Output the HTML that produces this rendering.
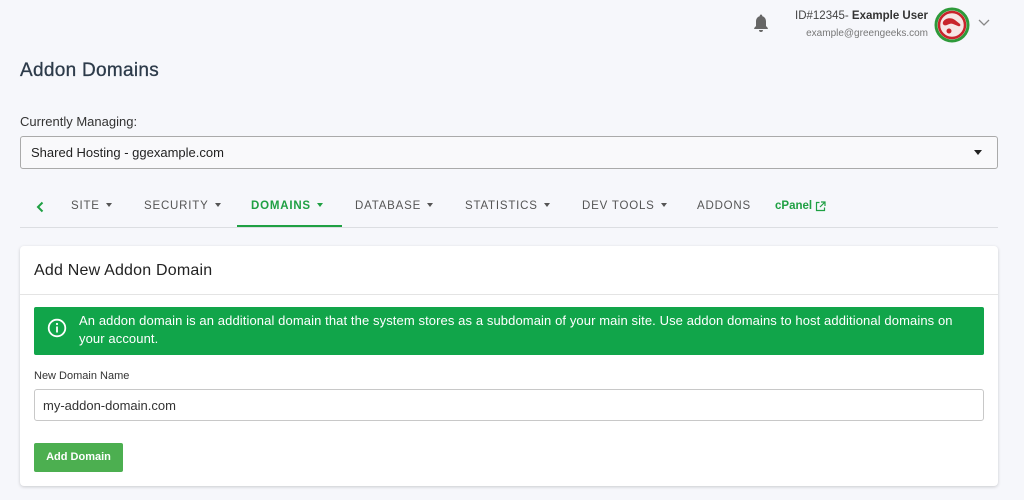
<!DOCTYPE html>
<html><head><meta charset="utf-8"><style>
*{box-sizing:border-box;margin:0;padding:0}
body{width:1024px;height:500px;overflow:hidden;background:#f6f7fb;font-family:"Liberation Sans",Arial,sans-serif;color:#333;position:relative}
.abs{position:absolute}
.tab{position:absolute;top:200px;font-size:11.5px;letter-spacing:0.8px;color:#555;white-space:nowrap}
.car{display:inline-block;border-left:3.5px solid transparent;border-right:3.5px solid transparent;border-top:4px solid currentColor;margin-left:6px;vertical-align:2px}
</style></head><body>
<svg class="abs" style="left:752px;top:13px" width="18" height="20" viewBox="0 0 18 20"><path d="M9 1.5c-.7 0-1.2.5-1.2 1.1v.5C5.3 3.8 4 5.9 4 8.5v4.5l-1.8 2v1h13.6v-1L14 13V8.5c0-2.6-1.3-4.7-3.8-5.4v-.5c0-.6-.5-1.1-1.2-1.1zM7 17a2 2 0 0 0 4 0z" fill="#666"/></svg>
<div class="abs" style="right:96px;top:10px;font-size:11.5px;color:#444;text-align:right;white-space:nowrap">ID#12345- <b style="color:#333">Example User</b></div>
<div class="abs" style="right:96px;top:28px;font-size:10px;color:#777;white-space:nowrap">example@greengeeks.com</div>
<svg class="abs" style="left:934px;top:7px" width="36" height="36" viewBox="0 0 36 36"><circle cx="18" cy="18" r="16" fill="#fff" stroke="#2e9a3a" stroke-width="3"/><circle cx="18" cy="18" r="13" fill="#f6e6e6" stroke="#c8242b" stroke-width="2.5"/><path d="M9 15c2-4 8-5 12-2l5 4c1 1 0 3-2 2l-5-2c-2-1-4 0-6 1-2 1-5 0-4-3z" fill="#c8242b"/><circle cx="15" cy="24" r="2.5" fill="#c8242b"/></svg>
<svg class="abs" style="left:978px;top:19px" width="12" height="8" viewBox="0 0 12 8"><path d="M1 1l5 5 5-5" fill="none" stroke="#888" stroke-width="1.3"/></svg>
<div class="abs" style="left:20px;top:60px;font-size:19px;color:#2d3b4a;letter-spacing:0.3px;-webkit-text-stroke:0.3px #2d3b4a">Addon Domains</div>
<div class="abs" style="left:20px;top:114px;font-size:13px;color:#333">Currently Managing:</div>
<div class="abs" style="left:20px;top:136px;width:978px;height:33px;border:1px solid #aaa;border-radius:3px;background:#f9f9fb;font-size:13px;padding:8px 10px;color:#222">Shared Hosting - ggexample.com</div>
<div class="abs" style="left:974px;top:150px;border-left:4px solid transparent;border-right:4px solid transparent;border-top:5px solid #222"></div>
<svg class="abs" style="left:36px;top:201px" width="8" height="12" viewBox="0 0 8 12"><path d="M6.5 1.5L2 6l4.5 4.5" fill="none" stroke="#1fa043" stroke-width="2"/></svg>
<div class="tab" style="left:71px">SITE<span class="car"></span></div>
<div class="tab" style="left:144px">SECURITY<span class="car"></span></div>
<div class="tab" style="left:251px;color:#1fa043;font-weight:bold">DOMAINS<span class="car"></span></div>
<div class="tab" style="left:355px">DATABASE<span class="car"></span></div>
<div class="tab" style="left:465px">STATISTICS<span class="car"></span></div>
<div class="tab" style="left:582px">DEV TOOLS<span class="car"></span></div>
<div class="tab" style="left:697px">ADDONS</div>
<div class="abs" style="left:775px;top:200px;font-size:11.5px;color:#1fa043;font-weight:bold">cPanel</div>
<svg class="abs" style="left:815px;top:201px" width="11" height="11" viewBox="0 0 11 11"><path d="M4.5 1.5H1.5v8h8V6.5M6 1h4v4M10 1L5 6" fill="none" stroke="#1fa043" stroke-width="1.2"/></svg>
<div class="abs" style="left:20px;top:227px;width:978px;height:1px;background:#dcdee2"></div>
<div class="abs" style="left:237px;top:225px;width:105px;height:2px;background:#1fa043"></div>
<div class="abs" style="left:20px;top:246px;width:978px;height:240px;background:#fff;border-radius:4px;box-shadow:0 1px 3px rgba(0,0,0,.18)"></div>
<div class="abs" style="left:34px;top:262px;font-size:16px;color:#222;letter-spacing:0.2px">Add New Addon Domain</div>
<div class="abs" style="left:20px;top:294px;width:978px;height:1px;background:#e4e4e4"></div>
<div class="abs" style="left:34px;top:307px;width:950px;height:48px;background:#11a54a;border-radius:2px"></div>
<svg class="abs" style="left:47px;top:318px" width="20" height="20" viewBox="0 0 20 20"><circle cx="10" cy="10" r="8.3" fill="none" stroke="#fff" stroke-width="1.8"/><rect x="9.1" y="8.5" width="1.8" height="6" fill="#fff"/><circle cx="10" cy="6" r="1.1" fill="#fff"/></svg>
<div class="abs" style="left:79px;top:312px;width:884px;font-size:13px;line-height:18px;color:#fff;letter-spacing:0.1px">An addon domain is an additional domain that the system stores as a subdomain of your main site. Use addon domains to host additional domains on your account.</div>
<div class="abs" style="left:34px;top:370px;font-size:11px;color:#333">New Domain Name</div>
<div class="abs" style="left:34px;top:389px;width:950px;height:32px;border:1px solid #c8c8c8;border-radius:3px;font-size:13px;padding:8px 8px;color:#333">my-addon-domain.com</div>
<div class="abs" style="left:34px;top:443px;width:89px;height:29px;background:#4caf50;border-radius:2px;color:#fff;font-size:11px;font-weight:bold;text-align:center;line-height:29px">Add Domain</div>
</body></html>
